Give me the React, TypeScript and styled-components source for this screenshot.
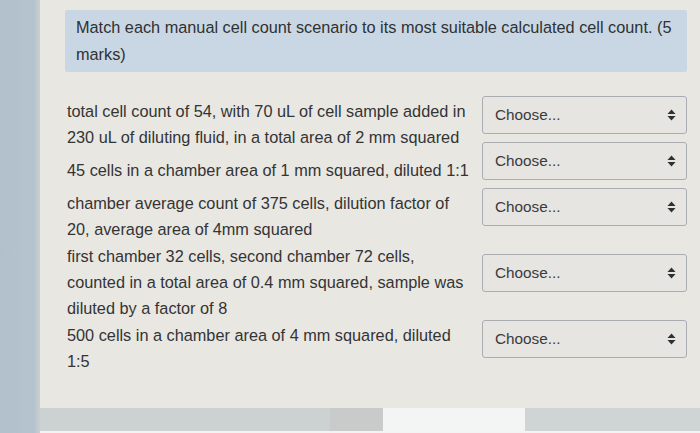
import React from "react";
import styled, { createGlobalStyle } from "styled-components";

const GlobalStyle = createGlobalStyle`
  html, body {
    margin: 0;
    padding: 0;
    height: 100%;
  }
  body {
    font-family: "Liberation Sans", Arial, sans-serif;
    background: #e8e6e0;
    overflow: hidden;
  }
`;

const Screen = styled.div`
  display: flex;
  width: 700px;
  height: 433px;
`;

const SideRail = styled.div`
  width: 40px;
  flex-shrink: 0;
  background: linear-gradient(90deg, #b2c0cc 0%, #b5c3cf 85%, #c9cfd0 100%);
`;

const Main = styled.main`
  flex: 1;
  display: flex;
  flex-direction: column;
  background: #e9e7e1;
`;

const Content = styled.div`
  flex: 1;
  padding: 10px 14px 0 25px;
`;

const Prompt = styled.div`
  background: #c9d7e4;
  border-radius: 2px;
  padding: 4px 11px 4px 11px;
  font-size: 16.3px;
  line-height: 27px;
  color: #2f3133;
`;

const Answers = styled.div`
  display: flex;
  flex-direction: column;
  gap: 1px;
  margin-top: 26px;
  margin-left: 2px;
`;

const AnswerRow = styled.div`
  display: flex;
  align-items: center;
  min-height: 38px;
`;

const Scenario = styled.div`
  width: 406px;
  flex-shrink: 0;
  font-size: 16.3px;
  line-height: 26px;
  color: #333436;
`;

const Select = styled.div`
  width: 205px;
  height: 38px;
  box-sizing: border-box;
  margin-left: 9px;
  margin-top: -18px;
  display: flex;
  align-items: center;
  justify-content: space-between;
  padding: 0 10px 0 12px;
  border: 1px solid #a9adb1;
  border-radius: 3px;
  background: #e6e5e1;
  font-size: 15.3px;
  color: #3a3b3d;
`;

const Footer = styled.div`
  height: 23px;
  display: flex;
  background: #d0d4d3;
  border-bottom: 2px solid #f2f3f2;
`;

const FooterGap = styled.div<{ $w: number; $tone: string }>`
  width: ${(p) => p.$w}px;
  background: ${(p) => p.$tone};
`;

const Caret = () => (
  <svg width="9" height="12" viewBox="0 0 9 12">
    <path d="M4.5 0.5 L8.5 5 H0.5 Z" fill="#2e3033" />
    <path d="M4.5 11.5 L8.5 7 H0.5 Z" fill="#2e3033" />
  </svg>
);

const scenarios = [
  "total cell count of 54, with 70 uL of cell sample added in 230 uL of diluting fluid, in a total area of 2 mm squared",
  "45 cells in a chamber area of 1 mm squared, diluted 1:1",
  "chamber average count of 375 cells, dilution factor of 20, average area of 4mm squared",
  "first chamber 32 cells, second chamber 72 cells, counted in a total area of 0.4 mm squared, sample was diluted by a factor of 8",
  "500 cells in a chamber area of 4 mm squared, diluted 1:5",
];

export default function App() {
  return (
    <>
      <GlobalStyle />
      <Screen>
        <SideRail />
        <Main>
          <Content>
            <Prompt>
              Match each manual cell count scenario to its most suitable calculated cell count. (5 marks)
            </Prompt>
            <Answers>
              {scenarios.map((s) => (
                <AnswerRow key={s}>
                  <Scenario>{s}</Scenario>
                  <Select>
                    <span>Choose...</span>
                    <Caret />
                  </Select>
                </AnswerRow>
              ))}
            </Answers>
          </Content>
          <Footer>
            <FooterGap $w={290} $tone="#ccd2d2" />
            <FooterGap $w={53} $tone="#c8cbca" />
            <FooterGap $w={142} $tone="#f3f4f4" />
            <FooterGap $w={175} $tone="#cfd4d4" />
          </Footer>
        </Main>
      </Screen>
    </>
  );
}
